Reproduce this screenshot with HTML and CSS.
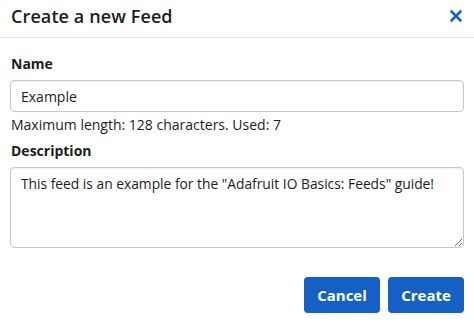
FILE: index.html
```html
<!DOCTYPE html>
<html lang="en">
<head>
<meta charset="UTF-8">
<meta name="viewport" content="width=device-width, initial-scale=1.0">
<title>Create a new Feed</title>
<link rel="stylesheet" href="styles.css">
</head>
<body>
<div class="modal">
  <div class="modal-header">
    <h2>Create a new Feed</h2>
    <button class="close" aria-label="Close">
      <svg width="12" height="12" viewBox="0 0 12 12"><path d="M1.5 1.5 L10.5 10.5 M10.5 1.5 L1.5 10.5" stroke="#1560c4" stroke-width="2.6" stroke-linecap="round"/></svg>
    </button>
  </div>
  <div class="modal-body">
    <label class="label" for="name">Name</label>
    <input class="field" id="name" type="text" value="Example">
    <p class="hint">Maximum length: 128 characters. Used: 7</p>
    <label class="label" for="desc">Description</label>
    <textarea class="field area" id="desc">This feed is an example for the "Adafruit IO Basics: Feeds" guide!</textarea>
  </div>
  <div class="modal-footer">
    <button class="btn">Cancel</button>
    <button class="btn">Create</button>
  </div>
</div>
</body>
</html>
```

FILE: styles.css
```css
* {
  padding: 0;
  margin: 0;
  box-sizing: border-box;
}
body {
  font-family: "Open Sans", Arial, sans-serif;
  background-color: #fff;
  color: #1c1c1c;
}
.modal {
  width: 474px;
}
.modal-header {
  display: flex;
  justify-content: space-between;
  align-items: center;
  height: 38px;
  padding: 0 11px 0 11px;
  border-bottom: 1px solid #e6e6e6;
}
.modal-header h2 {
  font-size: 18px;
  font-weight: 600;
  letter-spacing: 0.1px;
  margin-top: -6px;
}
.close {
  background: none;
  border: none;
  margin-top: -6px;
  margin-right: 1px;
  display: flex;
}
.modal-body {
  padding: 16px 10px 0 10px;
}
.label {
  display: block;
  font-size: 14px;
  font-weight: 700;
  padding-left: 1px;
  line-height: 20px;
  margin-bottom: 6px;
}
.field {
  display: block;
  width: 100%;
  height: 32px;
  border: 1px solid #c8c8c8;
  border-radius: 4px;
  padding: 0 10px;
  font-family: "Open Sans", Arial, sans-serif;
  font-size: 14px;
  color: #1c1c1c;
  box-shadow: inset 0 1px 2px rgba(0, 0, 0, 0.08);
}
.area {
  height: 81px;
  padding: 6px 10px;
  font-size: 13.8px;
  resize: vertical;
}
.hint {
  font-size: 14px;
  line-height: 20px;
  padding-left: 1px;
  margin-top: 3px;
  margin-bottom: 6px;
}
.modal-footer {
  display: flex;
  justify-content: flex-end;
  gap: 8px;
  padding: 29px 10px 0 10px;
}
.btn {
  width: 76px;
  height: 36px;
  background-color: #1560c4;
  color: #fff;
  border: none;
  border-radius: 4px;
  font-family: "Open Sans", Arial, sans-serif;
  font-size: 15px;
  font-weight: 700;
}
```
